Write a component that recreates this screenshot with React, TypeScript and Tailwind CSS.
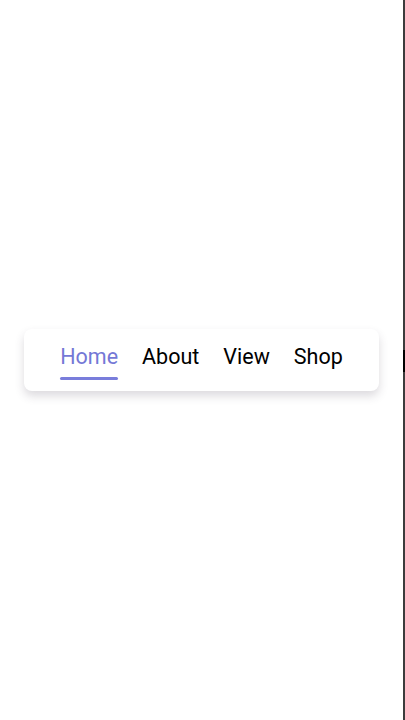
import { useState } from 'react';

const tabs = ['Home', 'About', 'View', 'Shop'];

const App = () => {
  const [active, setActive] = useState(0);

  return (
    <div className="flex h-[720px] w-[405px] bg-white" style={{ fontFamily: 'Roboto, "Noto Sans", sans-serif' }}>
      <div className="flex flex-1 items-center justify-center px-6">
        <nav className="flex w-full items-start justify-center gap-6 rounded-lg bg-white pt-[13px] pb-[11px] shadow-[0_5px_10px_rgba(60,50,70,0.18)]">
          {tabs.map((t, i) => (
            <button key={t} onClick={() => setActive(i)} className="flex flex-col items-center gap-[6px]">
              <span className={`text-[21.5px] leading-[29px] ${i === active ? 'text-[#7478d6]' : 'text-black'}`}>{t}</span>
              <span className={`h-[3px] w-full rounded-full ${i === active ? 'bg-[#797ddb]' : 'bg-transparent'}`} />
            </button>
          ))}
        </nav>
      </div>
      {/* device edge */}
      <div className="flex w-[2px] flex-col bg-[#3c3c3c]">
        <div className="h-[350px]" />
        <div className="h-[22px] bg-black" />
      </div>
    </div>
  );
};

export default App;
